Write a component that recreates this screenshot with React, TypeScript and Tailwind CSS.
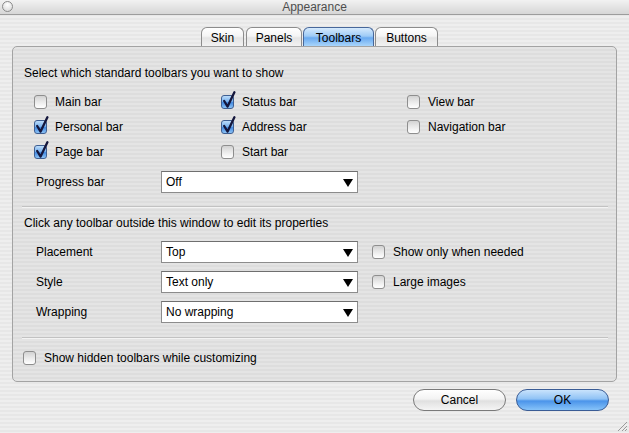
import React from "react";

function Checkbox({ checked }: { checked?: boolean }) {
  return (
    <span className="relative inline-block w-[13px] h-[14px] shrink-0">
      <span
        className={
          checked
            ? "absolute inset-0 rounded-[3px] border border-[#3f5f92] bg-[linear-gradient(180deg,#bcdcfa_0%,#7ab3ef_45%,#4389e0_55%,#8cc3f6_100%)]"
            : "absolute inset-0 rounded-[3px] border border-[#8e8e8e] bg-[linear-gradient(180deg,#d2d2d2_0%,#e6e6e6_40%,#f3f3f3_70%,#ffffff_100%)]"
        }
      />
      {checked && (
        <svg className="absolute left-[1px] top-[-4px]" width="14" height="18" viewBox="0 0 14 18">
          <path d="M2.2 10 L5.6 15.6 L12.4 1.2" fill="none" stroke="#14163c" strokeWidth="2.3" strokeLinecap="round" strokeLinejoin="round" />
        </svg>
      )}
    </span>
  );
}

function Select({ value }: { value: string }) {
  return (
    <div className="relative w-[197px] h-[22px] shrink-0 bg-white border border-[#8c8c8c] border-t-[#6f6f6f] flex items-center pl-[4px] leading-[16px]">
      {value}
      <svg className="absolute right-[4px] top-[7px]" width="10" height="8" viewBox="0 0 10 8">
        <path d="M0 0 H10 L5 8 Z" fill="#000" />
      </svg>
    </div>
  );
}

function Check({ checked, label }: { checked?: boolean; label: string }) {
  return (
    <div className="flex items-center gap-[8px] h-[25px]">
      <Checkbox checked={checked} />
      <span className="leading-[16px]">{label}</span>
    </div>
  );
}

function Tab({ label, width, active }: { label: string; width: string; active?: boolean }) {
  return (
    <div
      className={
        (active
          ? "border-[#47679a] bg-[linear-gradient(180deg,#d6eafd_0%,#9ecbf6_45%,#6aaaf0_55%,#a9d5fb_100%)] "
          : "border-[#8c8c8c] bg-[linear-gradient(180deg,#ffffff_0%,#f4f4f4_45%,#e4e4e4_55%,#f2f2f2_100%)] ") +
        width +
        " h-[19px] rounded-t-[6px] border border-b-0 flex items-center justify-center leading-[16px] pt-[1px]"
      }
    >
      {label}
    </div>
  );
}

function Row({ label, value, check }: { label: string; value: string; check?: string }) {
  return (
    <div className="flex items-center h-[22px] pl-[23px]">
      <span className="w-[125px] leading-[16px]">{label}</span>
      <Select value={value} />
      {check && (
        <div className="flex items-center gap-[8px] ml-[14px]">
          <Checkbox />
          <span className="leading-[16px]">{check}</span>
        </div>
      )}
    </div>
  );
}

function Button({ label, primary }: { label: string; primary?: boolean }) {
  return (
    <div
      className={
        (primary
          ? "border-[#3a5c95] bg-[linear-gradient(180deg,#c9e3fc_0%,#8fc2f5_45%,#4b94ea_55%,#86c3f9_100%)] "
          : "border-[#7a7a7a] bg-[linear-gradient(180deg,#ffffff_0%,#f3f3f3_45%,#e0e0e0_55%,#f5f5f5_100%)] ") +
        "w-[93px] h-[22px] rounded-full border flex items-center justify-center leading-[16px]"
      }
    >
      {label}
    </div>
  );
}

export default function App() {
  return (
    <div className="relative w-[629px] h-[433px] overflow-hidden font-['Liberation_Sans',Arial,sans-serif] text-[12px] text-black bg-[repeating-linear-gradient(180deg,#eeeeee_0px,#eeeeee_2px,#e7e7e7_2px,#e7e7e7_4px)]">
      <div className="relative h-[15px] border-b border-[#9c9c9c] bg-[linear-gradient(180deg,#f2f2f2,#d6d6d6)] flex items-center justify-center">
        <span className="absolute left-[2px] top-[1px] w-[11px] h-[11px] rounded-full border border-[#8a8a8a] bg-[radial-gradient(circle_at_50%_30%,#ffffff,#d4d4d4)]" />
        <span className="leading-[14px] text-[#4e4e4e]">Appearance</span>
      </div>

      <div className="relative z-10 flex ml-[201px] mt-[12px] h-[19px]">
        <Tab label="Skin" width="w-[43px]" />
        <div className="w-[2px]" />
        <Tab label="Panels" width="w-[56px]" />
        <div className="w-[1px]" />
        <Tab label="Toolbars" width="w-[71px]" active />
        <div className="w-[1px]" />
        <Tab label="Buttons" width="w-[63px]" />
      </div>

      <div className="mx-[12px] h-[336px] rounded-[5px] border border-[#a3a3a3] bg-[repeating-linear-gradient(180deg,#e4e4e4_0px,#e4e4e4_2px,#dddddd_2px,#dddddd_4px)] flex flex-col">
        <div className="pt-[18px] pl-[11px] leading-[16px]">Select which standard toolbars you want to show</div>
        <div className="grid grid-cols-[187px_186px_1fr] mt-[8px] pl-[21px]">
          <Check label="Main bar" />
          <Check label="Status bar" checked />
          <Check label="View bar" />
          <Check label="Personal bar" checked />
          <Check label="Address bar" checked />
          <Check label="Navigation bar" />
          <Check label="Page bar" checked />
          <Check label="Start bar" />
          <div />
        </div>
        <div className="mt-[7px]">
          <Row label="Progress bar" value="Off" />
        </div>
        <div className="mt-[13px] ml-[9px] mr-[8px] h-px bg-[#c2c2c2] shadow-[0_1px_0_#f3f3f3]" />
        <div className="mt-[8px] pl-[11px] leading-[16px]">Click any toolbar outside this window to edit its properties</div>
        <div className="mt-[10px] flex flex-col gap-[8px]">
          <Row label="Placement" value="Top" check="Show only when needed" />
          <Row label="Style" value="Text only" check="Large images" />
          <Row label="Wrapping" value="No wrapping" />
        </div>
        <div className="mt-[14px] ml-[9px] mr-[8px] h-px bg-[#c2c2c2] shadow-[0_1px_0_#f3f3f3]" />
        <div className="mt-[12px] pl-[10px] flex items-center gap-[8px] h-[16px]">
          <Checkbox />
          <span className="leading-[16px]">Show hidden toolbars while customizing</span>
        </div>
      </div>

      <div className="flex justify-end gap-[10px] pr-[20px] mt-[7px]">
        <Button label="Cancel" />
        <Button label="OK" primary />
      </div>

      <svg className="absolute right-[1px] bottom-[1px]" width="11" height="11" viewBox="0 0 11 11">
        <path d="M10 1 L1 10 M10 5 L5 10 M10 8 L8 10" stroke="#9a9a9a" strokeWidth="1" />
      </svg>
    </div>
  );
}
